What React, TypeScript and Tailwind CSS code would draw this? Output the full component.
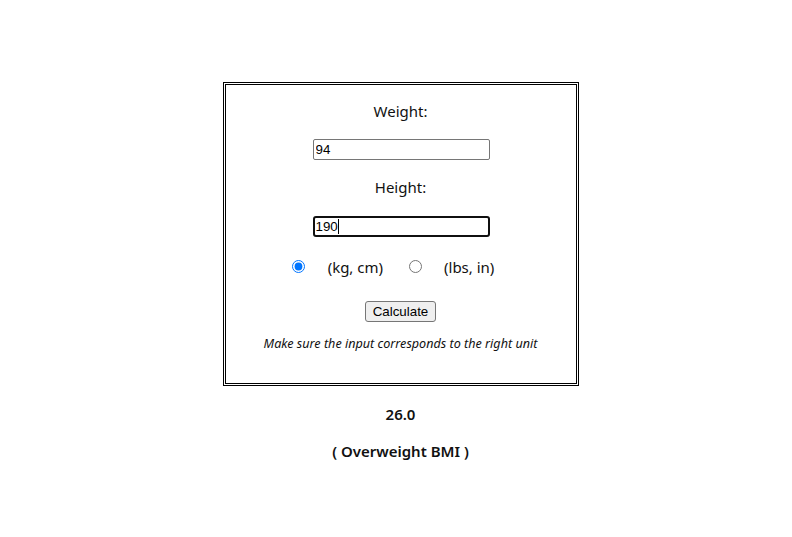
import React from "react";

export default function App() {
  return (
    <div className="min-h-[537px] w-full bg-white pl-[9px] font-['Noto_Sans',sans-serif] text-[#111]">
      <div className="flex flex-col items-center pt-[82px]">
        <div className="w-[356px] border-[3px] border-double border-black flex flex-col items-center pt-[15px] pb-[30px]">
          <p className="text-[15px] leading-[22px]">Weight:</p>
          <input
            type="text"
            defaultValue="94"
            className="mt-[17px] ml-px w-[177px] h-[21px] border border-[#767676] rounded-[2px] px-[2px] font-['Liberation_Sans',sans-serif] text-[13.33px] text-black bg-white outline-none"
          />
          <p className="mt-[16px] text-[15px] leading-[22px]">Height:</p>
          <div className="mt-[18px] ml-px w-[177px] h-[21px] border-2 border-[#101010] rounded-[3px] pl-[1px] flex items-center font-['Liberation_Sans',sans-serif] text-[13.33px] text-black bg-white">
            <span>190</span>
            <span className="inline-block w-px h-[15px] bg-black"></span>
          </div>
          <div className="mt-[19px] mr-[15px] h-[22px] flex items-center text-[15px] leading-[22px]">
            <input type="radio" name="unit" defaultChecked className="m-0 w-[13px] h-[13px] mr-[23px] relative top-[-1px]" />
            <span>(kg, cm)</span>
            <input type="radio" name="unit" className="m-0 w-[13px] h-[13px] ml-[26px] mr-[22px] relative top-[-1px]" />
            <span>(lbs, in)</span>
          </div>
          <button className="mt-[23px] h-[21px] px-[7px] border border-[#767676] rounded-[3px] bg-[#efefef] font-['Liberation_Sans',sans-serif] text-[13.33px] text-black leading-none">
            Calculate
          </button>
          <p className="mt-[13px] italic text-[12.6px] leading-[18px]">
            Make sure the input corresponds to the right unit
          </p>
        </div>
        <p className="mt-[17px] text-[15px] leading-[22px] font-semibold">26.0</p>
        <p className="mt-[15px] text-[15px] leading-[22px] font-semibold">( Overweight BMI )</p>
      </div>
    </div>
  );
}
